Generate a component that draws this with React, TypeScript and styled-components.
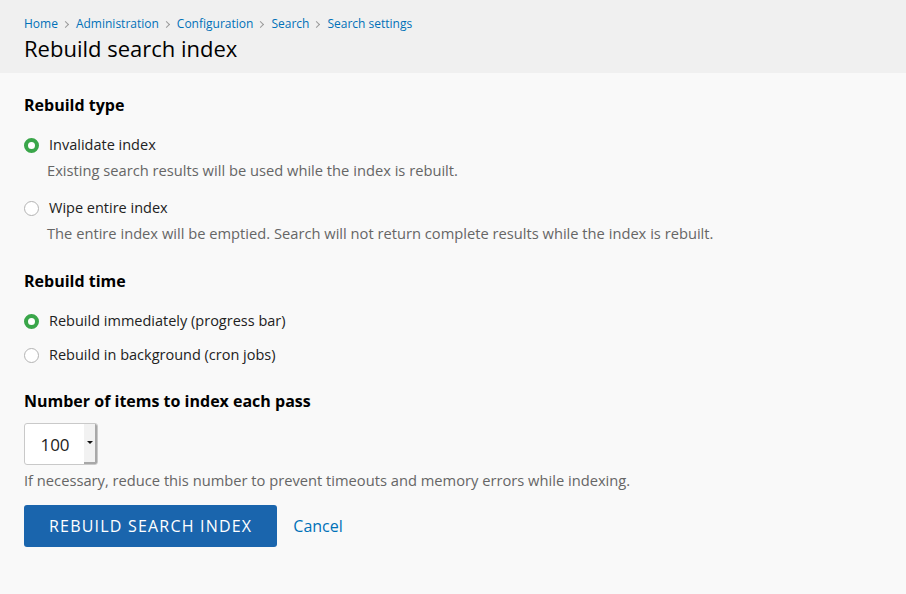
import React, { useState } from 'react';
import styled, { createGlobalStyle } from 'styled-components';

const GlobalStyle = createGlobalStyle`
  * { box-sizing: border-box; }
  html, body {
    margin: 0;
    padding: 0;
    background: #f9f9f9;
    font-family: 'Open Sans', 'Noto Sans', sans-serif;
    color: #222330;
  }
`;

const Header = styled.header`
  background: #f0f0f0;
  padding: 15px 24px 11px;
`;

const Breadcrumb = styled.nav`
  display: flex;
  align-items: center;
  font-size: 12px;
  line-height: 18px;
`;

const Crumb = styled.a`
  color: #0071b8;
  text-decoration: none;
`;

const Sep = styled.span`
  display: inline-block;
  width: 5px;
  height: 5px;
  margin: 1px 8px 0 5px;
  border-right: 1.5px solid #9a9a9a;
  border-top: 1.5px solid #9a9a9a;
  transform: rotate(45deg);
`;

const Title = styled.h1`
  margin: 1px 0 0;
  font-size: 22px;
  font-weight: 400;
  line-height: 28px;
  color: #000;
`;

const Main = styled.main`
  padding: 21px 24px 40px;
`;

const Fieldset = styled.section<{ $gap: number }>`
  margin-bottom: ${p => p.$gap}px;
`;

const Legend = styled.div<{ $gap: number }>`
  font-size: 16px;
  font-weight: 700;
  line-height: 22px;
  color: #000;
  margin-bottom: ${p => p.$gap}px;
`;

const Option = styled.label`
  display: flex;
  align-items: center;
  gap: 10px;
  font-size: 14.5px;
  line-height: 20px;
  color: #222;
  cursor: pointer;
`;

const RadioDot = styled.span<{ $checked: boolean }>`
  width: 15px;
  height: 15px;
  border-radius: 50%;
  flex: none;
  background: #fff;
  border: ${p => (p.$checked ? '4px solid #3aa64a' : '1px solid #b3b3b3')};
`;

const Description = styled.div`
  font-size: 14.7px;
  line-height: 20px;
  color: #666;
  margin: 5px 0 0 23px;
`;

const Item = styled.div<{ $gap: number }>`
  margin-bottom: ${p => p.$gap}px;
`;

const SelectWrap = styled.div`
  display: inline-flex;
  align-items: stretch;
  height: 42px;
  width: 74px;
  border: 1px solid #c9c9c9;
  border-radius: 3px;
  background: #fff;
  overflow: hidden;
`;

const SelectValue = styled.div`
  flex: 1;
  display: flex;
  align-items: center;
  justify-content: center;
  padding-left: 1px;
  font-size: 17px;
  color: #222;
`;

const SelectArrow = styled.div`
  width: 13px;
  display: flex;
  align-items: center;
  justify-content: center;
  background: #f2f2f2;
  border-right: 2px solid #a8a8a8;
  border-bottom: 2px solid #a8a8a8;
  &::after {
    content: '';
    border-left: 3px solid transparent;
    border-right: 3px solid transparent;
    border-top: 3px solid #111;
    margin-top: -2px;
  }
`;

const Help = styled.div`
  font-size: 14.7px;
  line-height: 20px;
  color: #666;
  margin-top: 5px;
`;

const Actions = styled.div`
  display: flex;
  align-items: center;
  gap: 16px;
  margin-top: 15px;
`;

const PrimaryButton = styled.button`
  height: 42px;
  padding: 0 25px;
  background: #1a65ad;
  color: #fff;
  border: none;
  border-radius: 3px;
  font-family: inherit;
  font-size: 16px;
  letter-spacing: 1.2px;
  text-transform: uppercase;
  cursor: pointer;
`;

const CancelLink = styled.a`
  font-size: 16px;
  color: #0071b8;
  text-decoration: none;
`;

type Opt = { id: string; label: string; description?: string };

const typeOptions: Opt[] = [
  { id: 'invalidate', label: 'Invalidate index', description: 'Existing search results will be used while the index is rebuilt.' },
  { id: 'wipe', label: 'Wipe entire index', description: 'The entire index will be emptied. Search will not return complete results while the index is rebuilt.' },
];

const timeOptions: Opt[] = [
  { id: 'immediate', label: 'Rebuild immediately (progress bar)' },
  { id: 'cron', label: 'Rebuild in background (cron jobs)' },
];

const RadioGroup: React.FC<{ options: Opt[]; value: string; onChange: (v: string) => void; gap: number }> = ({ options, value, onChange, gap }) => (
  <>
    {options.map((o, i) => (
      <Item key={o.id} $gap={i === options.length - 1 ? 0 : gap}>
        <Option onClick={() => onChange(o.id)}>
          <RadioDot $checked={value === o.id} />
          {o.label}
        </Option>
        {o.description && <Description>{o.description}</Description>}
      </Item>
    ))}
  </>
);

const App: React.FC = () => {
  const [type, setType] = useState('invalidate');
  const [time, setTime] = useState('immediate');

  return (
    <>
      <GlobalStyle />
      <Header>
        <Breadcrumb>
          <Crumb href="#">Home</Crumb>
          <Sep />
          <Crumb href="#">Administration</Crumb>
          <Sep />
          <Crumb href="#">Configuration</Crumb>
          <Sep />
          <Crumb href="#">Search</Crumb>
          <Sep />
          <Crumb href="#">Search settings</Crumb>
        </Breadcrumb>
        <Title>Rebuild search index</Title>
      </Header>
      <Main>
        <Fieldset $gap={27}>
          <Legend $gap={19}>Rebuild type</Legend>
          <RadioGroup options={typeOptions} value={type} onChange={setType} gap={18} />
        </Fieldset>
        <Fieldset $gap={25}>
          <Legend $gap={19}>Rebuild time</Legend>
          <RadioGroup options={timeOptions} value={time} onChange={setTime} gap={14} />
        </Fieldset>
        <Legend $gap={11}>Number of items to index each pass</Legend>
        <SelectWrap>
          <SelectValue>100</SelectValue>
          <SelectArrow />
        </SelectWrap>
        <Help>If necessary, reduce this number to prevent timeouts and memory errors while indexing.</Help>
        <Actions>
          <PrimaryButton>Rebuild search index</PrimaryButton>
          <CancelLink href="#">Cancel</CancelLink>
        </Actions>
      </Main>
    </>
  );
};

export default App;
